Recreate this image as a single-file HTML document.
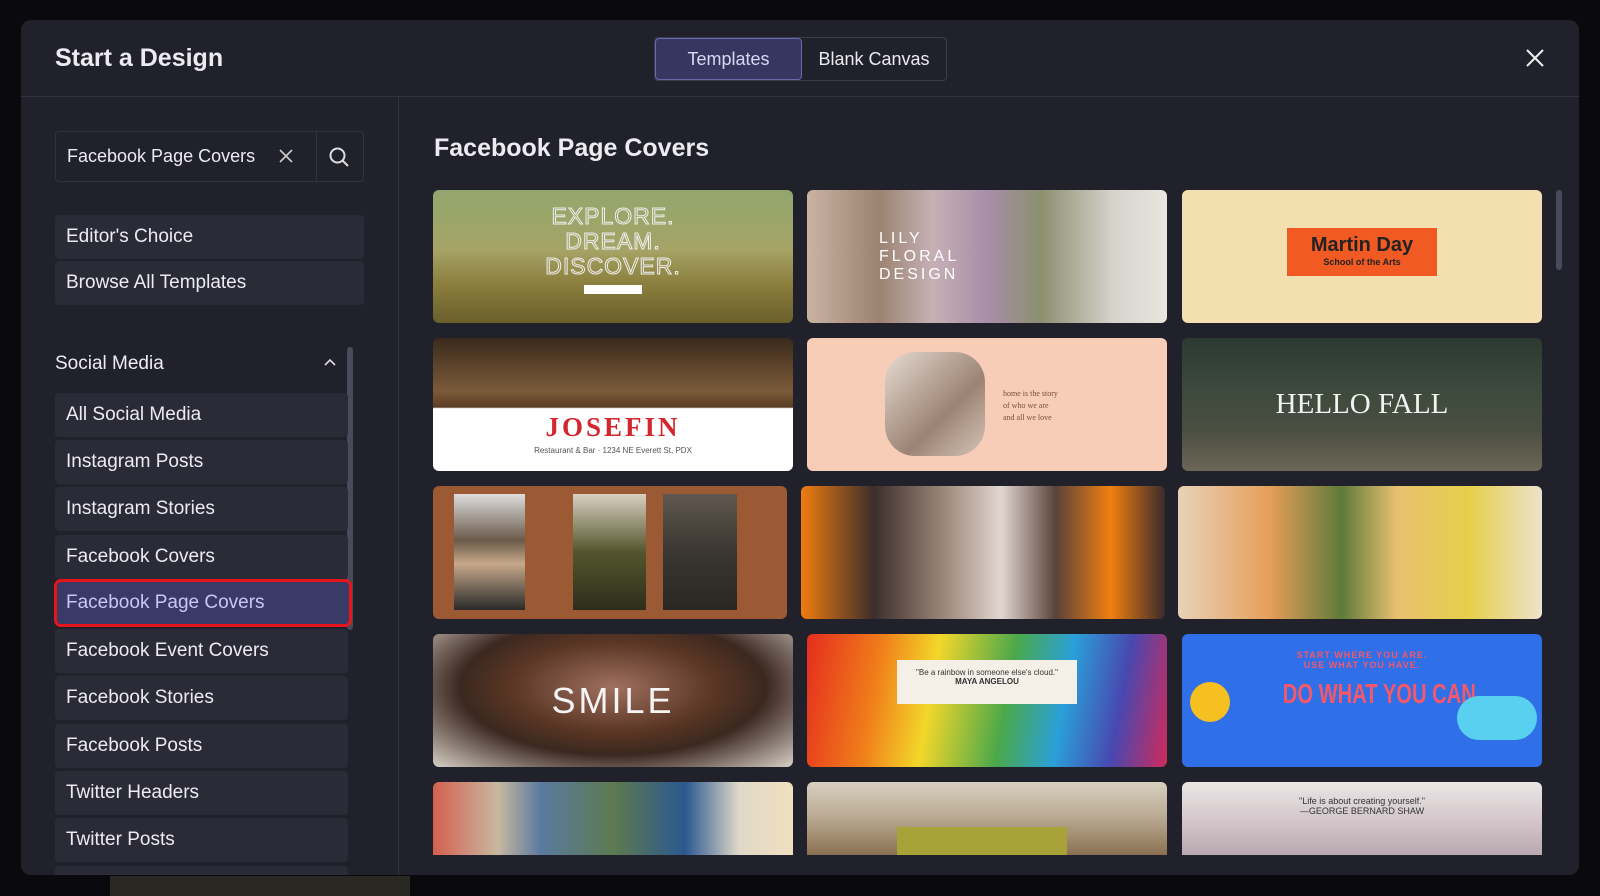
<!DOCTYPE html>
<html><head><meta charset="utf-8"><style>
*{box-sizing:border-box;margin:0;padding:0}
body{width:1600px;height:896px;background:#0a0a0e;font-family:"Liberation Sans",sans-serif;position:relative;overflow:hidden;color:#ecebf2}
.modal{position:absolute;left:21px;top:20px;width:1558px;height:855px;background:#21212b;border-radius:10px;overflow:hidden}
.hdr{position:absolute;left:0;top:0;width:100%;height:77px;border-bottom:1px solid #33333f}
.title{position:absolute;left:34px;top:24px;font-size:25px;font-weight:bold}
.tabs{position:absolute;left:633px;top:17px;height:44px;display:flex;border:1px solid #3c3c4c;border-radius:4px}
.tab{width:144px;display:flex;align-items:center;justify-content:center;font-size:18px}
.tab.on{background:#363660;border:1px solid #6a6ab0;border-radius:4px;color:#d8d8f0;width:147px}
.close{position:absolute;left:1503px;top:27px}
.side{position:absolute;left:0;top:77px;width:378px;bottom:0;border-right:1px solid #33333f}
.search{position:absolute;left:34px;top:34px;width:309px;height:51px;border:1px solid #33333f;border-radius:4px;font-size:18px}
.search span{position:absolute;left:11px;top:14px;width:196px;overflow:hidden;white-space:nowrap}
.item{position:absolute;left:34px;height:44px;background:#2b2b38;border-radius:4px;font-size:19px;padding:11px 0 0 11px}
.sel{background:#3a3a66;color:#c8c8f8;outline:3px solid #e8141c;outline-offset:0}
.main h2{position:absolute;left:413px;top:114px;font-size:25px;font-weight:bold}
.t{position:absolute;border-radius:6px;overflow:hidden;width:360px;height:133px}
</style></head><body>
<div style="position:absolute;left:110px;top:876px;width:300px;height:20px;background:#2a2822"></div>
<div class="modal">
 <div class="hdr">
  <div class="title">Start a Design</div>
  <div class="tabs"><div class="tab on">Templates</div><div class="tab">Blank Canvas</div></div>
  <svg class="close" width="22" height="22" viewBox="0 0 22 22"><path d="M3 3L19 19M19 3L3 19" stroke="#eee" stroke-width="2"/></svg>
 </div>
 <div class="side">
  <div class="search"><span>Facebook Page Covers</span>
   <svg style="position:absolute;left:223px;top:17px" width="14" height="14"><path d="M1 1L13 13M13 1L1 13" stroke="#ccc" stroke-width="1.6"/></svg>
   <div style="position:absolute;left:260px;top:0;width:1px;height:49px;background:#33333f"></div>
   <svg style="position:absolute;left:272px;top:14px" width="22" height="22"><circle cx="9.5" cy="9.5" r="7" stroke="#ddd" stroke-width="2" fill="none"/><path d="M14.5 14.5L20 20" stroke="#ddd" stroke-width="2"/></svg>
  </div>
  <div class="item" style="top:118px;width:309px">Editor's Choice</div>
  <div class="item" style="top:164px;width:309px">Browse All Templates</div>
  <div style="position:absolute;left:34px;top:256px;font-size:19px">Social Media</div>
  <svg style="position:absolute;left:303px;top:260px" width="12" height="10"><path d="M1 8L6 3L11 8" stroke="#ddd" stroke-width="1.6" fill="none"/></svg>
  <div style="position:absolute;left:326px;top:250px;width:6px;height:283px;background:#4a4a5a;border-radius:3px"></div>
  <div class="item" style="top:296px;width:293px">All Social Media</div>
  <div class="item" style="top:343px;width:293px">Instagram Posts</div>
  <div class="item" style="top:390px;width:293px">Instagram Stories</div>
  <div class="item" style="top:438px;width:293px">Facebook Covers</div>
  <div class="item sel" style="top:485px;width:292px;height:42px;left:36px;padding-left:9px;padding-top:10px">Facebook Page Covers</div>
  <div class="item" style="top:532px;width:293px">Facebook Event Covers</div>
  <div class="item" style="top:579px;width:293px">Facebook Stories</div>
  <div class="item" style="top:627px;width:293px">Facebook Posts</div>
  <div class="item" style="top:674px;width:293px">Twitter Headers</div>
  <div class="item" style="top:721px;width:293px">Twitter Posts</div>
  <div class="item" style="top:769px;width:293px"></div>
 </div>
 <div class="main">
  <h2>Facebook Page Covers</h2>
  <div style="position:absolute;left:1535px;top:170px;width:6px;height:80px;background:#4a4a5a;border-radius:3px"></div>
  <div class="t" style="left:412px;top:170px;background:linear-gradient(#93a66d 0%,#a5a466 45%,#8c7f3e 70%,#6b5f2c 100%);text-align:center;color:transparent;-webkit-text-stroke:1px #eee;font-size:23px;line-height:25px;padding-top:14px;letter-spacing:1px">EXPLORE.<br>DREAM.<br>DISCOVER.<div style="width:58px;height:9px;background:#fff;margin:6px auto"></div></div>
  <div class="t" style="left:786px;top:170px;background:linear-gradient(90deg,#c9b3a3 0%,#9b8370 20%,#c6b0b5 35%,#a98ea9 50%,#8b8f6e 65%,#d6d3cc 85%,#e9e6e0 100%)"><div style="position:absolute;left:72px;top:40px;color:#fff;font-size:16px;letter-spacing:3px;line-height:18px">LILY<br>FLORAL<br>DESIGN</div></div>
  <div class="t" style="left:1161px;top:170px;background:#f3e0b0"><div style="position:absolute;left:105px;top:38px;width:150px;height:48px;background:#f15a22;text-align:center;color:#222;font-weight:bold;font-size:20px;padding-top:6px">Martin Day<div style="font-size:9px">School of the Arts</div></div></div>
  <div class="t" style="left:412px;top:318px;background:linear-gradient(#3a2a1c 0%,#7b5a38 40%,#5a3d26 52%,#fff 53%,#fff 100%)"><div style="position:absolute;top:74px;width:100%;text-align:center;color:#d3262f;font-family:'Liberation Serif',serif;font-size:27px;font-weight:bold;letter-spacing:3px">JOSEFIN</div><div style="position:absolute;top:108px;width:100%;text-align:center;color:#555;font-size:8px">Restaurant &amp; Bar · 1234 NE Everett St, PDX</div></div>
  <div class="t" style="left:786px;top:318px;background:#f8cdb8"><div style="position:absolute;left:78px;top:14px;width:100px;height:104px;border-radius:30px;background:linear-gradient(135deg,#e6dbd2,#9c8374 60%,#d5c4b8)"></div><div style="position:absolute;left:196px;top:50px;color:#7a4c3a;font-size:8px;line-height:12px;font-family:'Liberation Serif',serif">home is the story<br>of who we are<br>and all we love</div></div>
  <div class="t" style="left:1161px;top:318px;background:linear-gradient(#2c3a33 0%,#3f4b3d 45%,#4b4f42 70%,#6c6656 100%)"><div style="position:absolute;top:50px;width:100%;text-align:center;font-family:'Liberation Serif',serif;font-size:29px;color:#f2f2f2">HELLO FALL</div></div>
  <div class="t" style="left:412px;top:466px;width:354px;background:#9b5a33"><div style="position:absolute;left:21px;top:8px;width:71px;height:116px;background:linear-gradient(#ddd,#6a5a4a 40%,#c7a88a 60%,#2a2a2a)"></div><div style="position:absolute;left:140px;top:8px;width:73px;height:116px;background:linear-gradient(#d8d0c0,#54552e 50%,#2e2d1c)"></div><div style="position:absolute;left:230px;top:8px;width:74px;height:116px;background:linear-gradient(#605850,#3a3630 50%,#2a2622)"></div></div>
  <div class="t" style="left:780px;top:466px;width:364px;background:linear-gradient(90deg,#f07c10,#3b2e2c 20%,#a08a7c 40%,#e1d7d2 55%,#5a423a 70%,#f08010 85%,#3b2a2c)"></div>
  <div class="t" style="left:1157px;top:466px;width:364px;background:linear-gradient(90deg,#e7d2b8,#e69f5a 25%,#5f7a3a 45%,#e8c070 60%,#e6cf4a 80%,#ede2cd)"></div>
  <div class="t" style="left:412px;top:614px;background:radial-gradient(ellipse at 50% 40%,#a07060 0%,#5a3624 40%,#3b2820 60%,#d8d0c6 100%)"><div style="position:absolute;top:46px;width:100%;text-align:center;font-size:36px;color:#f4f4f4;letter-spacing:3px">SMILE</div></div>
  <div class="t" style="left:786px;top:614px;background:linear-gradient(100deg,#e52d1e 0%,#f07e1a 20%,#f3d72a 35%,#4ba84a 55%,#2aa0d8 70%,#4848b0 85%,#d02a5a 100%)"><div style="position:absolute;left:90px;top:26px;width:180px;height:44px;background:#f4f0e8;color:#333;font-size:8px;text-align:center;padding-top:8px">"Be a rainbow in someone else's cloud."<br><b>MAYA ANGELOU</b></div></div>
  <div class="t" style="left:1161px;top:614px;background:#2f6fe8"><div style="position:absolute;left:70px;top:16px;width:220px;text-align:center;color:#f4586a;font-size:9px;font-weight:bold;letter-spacing:1px">START WHERE YOU ARE.<br>USE WHAT YOU HAVE.</div><div style="position:absolute;left:70px;top:44px;width:220px;text-align:center;color:#f4586a;font-size:28px;font-weight:bold;white-space:nowrap;transform:scaleX(0.72)">DO WHAT YOU CAN.</div><div style="position:absolute;left:8px;top:48px;width:40px;height:40px;border-radius:50%;background:#f6c020"></div><div style="position:absolute;left:275px;top:62px;width:80px;height:44px;border-radius:22px;background:#5ad0f0"></div></div>
  <div class="t" style="left:412px;top:762px;height:73px;border-radius:6px 6px 0 0;background:linear-gradient(90deg,#d46050,#c8b8a0 18%,#5a7aa0 30%,#5d7a50 50%,#2b5890 70%,#e0d8c8 85%,#f0e0c0)"></div>
  <div class="t" style="left:786px;top:762px;height:73px;border-radius:6px 6px 0 0;background:linear-gradient(#d8d0c0,#b8a890 50%,#8a7050)"><div style="position:absolute;left:90px;top:45px;width:170px;height:28px;background:#a9a238"></div></div>
  <div class="t" style="left:1161px;top:762px;height:73px;border-radius:6px 6px 0 0;background:linear-gradient(#eae6e6,#d0c2c6 60%,#b8a8b0)"><div style="position:absolute;top:14px;width:100%;text-align:center;font-size:9px;color:#333">"Life is about creating yourself."<br>—GEORGE BERNARD SHAW</div></div>
 </div>
</div>
</body></html>
